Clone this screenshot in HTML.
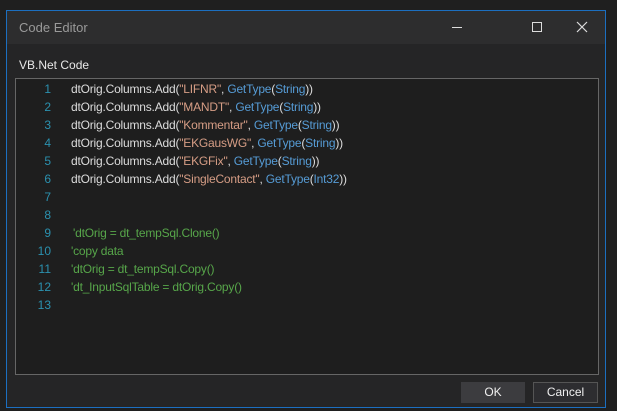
<!DOCTYPE html>
<html><head><style>
body{margin:0;width:617px;height:411px;background:#1f1f1f;position:relative;overflow:hidden;font-family:"Liberation Sans",sans-serif;font-size:12px}
.win{position:absolute;left:6px;top:10px;width:598px;height:396px;border:1px solid #1c6fc0;background:#252526}
.title{position:absolute;left:0;top:0;width:598px;height:33px;background:#2d2d2e;color:#9a9a9a;font-size:13px}
.title span{position:absolute;left:12px;top:9px}
.lbl{position:absolute;left:12px;top:47px;color:#e8e8e8;font-size:12px}
.ed{position:absolute;left:8px;top:67px;width:582px;height:295px;border:1px solid #666;background:#1e1e1e}
.ln{position:absolute;left:0;width:35px;text-align:right;color:#2b91af}
.cd{position:absolute;left:55px;color:#dcdcdc;white-space:pre;letter-spacing:-0.2px}
.s{color:#d69d85}.k{color:#569cd6}.c{color:#57a64a}
.btn{position:absolute;top:371px;width:64px;height:21px;color:#f0f0f0;text-align:center;line-height:21px;font-size:12px}
</style></head><body>
<div class="win">
<div class="title"><span>Code Editor</span>
<div style="position:absolute;left:445px;top:16px;width:10px;height:1px;background:#ddd"></div>
<div style="position:absolute;left:525px;top:11px;width:8px;height:8px;border:1px solid #ddd"></div>
<svg style="position:absolute;left:569px;top:10px" width="12" height="12"><path d="M1 1L11 11M11 1L1 11" stroke="#ddd" stroke-width="1.2"/></svg>
</div>
<div class="lbl">VB.Net Code</div>
<div class="ed">
<div class="ln" style="top:3px">1</div><div class="cd" style="top:3px">dtOrig.Columns.Add(<span class="s">"LIFNR"</span>, <span class="k">GetType</span>(<span class="k">String</span>))</div>
<div class="ln" style="top:21px">2</div><div class="cd" style="top:21px">dtOrig.Columns.Add(<span class="s">"MANDT"</span>, <span class="k">GetType</span>(<span class="k">String</span>))</div>
<div class="ln" style="top:39px">3</div><div class="cd" style="top:39px">dtOrig.Columns.Add(<span class="s">"Kommentar"</span>, <span class="k">GetType</span>(<span class="k">String</span>))</div>
<div class="ln" style="top:57px">4</div><div class="cd" style="top:57px">dtOrig.Columns.Add(<span class="s">"EKGausWG"</span>, <span class="k">GetType</span>(<span class="k">String</span>))</div>
<div class="ln" style="top:75px">5</div><div class="cd" style="top:75px">dtOrig.Columns.Add(<span class="s">"EKGFix"</span>, <span class="k">GetType</span>(<span class="k">String</span>))</div>
<div class="ln" style="top:93px">6</div><div class="cd" style="top:93px">dtOrig.Columns.Add(<span class="s">"SingleContact"</span>, <span class="k">GetType</span>(<span class="k">Int32</span>))</div>
<div class="ln" style="top:111px">7</div>
<div class="ln" style="top:129px">8</div>
<div class="ln" style="top:147px">9</div><div class="cd c" style="top:147px;left:57px">'dtOrig = dt_tempSql.Clone()</div>
<div class="ln" style="top:165px">10</div><div class="cd c" style="top:165px">'copy data</div>
<div class="ln" style="top:183px">11</div><div class="cd c" style="top:183px">'dtOrig = dt_tempSql.Copy()</div>
<div class="ln" style="top:201px">12</div><div class="cd c" style="top:201px">'dt_InputSqlTable = dtOrig.Copy()</div>
<div class="ln" style="top:219px">13</div>
</div>
<div class="btn" style="left:454px;background:#3c3c3f">OK</div>
<div class="btn" style="left:526px;border:1px solid #555;height:19px;line-height:19px;width:63px;background:#2d2d30">Cancel</div>
</div>
</body></html>
